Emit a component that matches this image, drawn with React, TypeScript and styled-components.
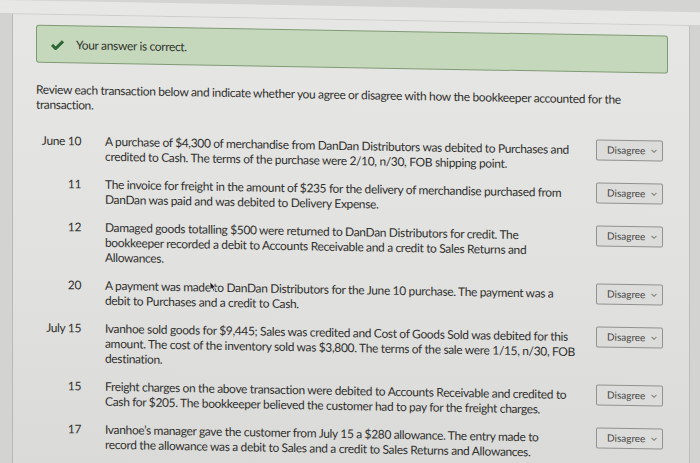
import styled, { createGlobalStyle } from "styled-components";

const GlobalStyle = createGlobalStyle`
  html, body {
    margin: 0;
    padding: 0;
    background: #d4d4d2;
    overflow: hidden;
  }
  body {
    font-family: Lato, "Open Sans", "Liberation Sans", sans-serif;
    color: #30302e;
    letter-spacing: -0.35px;
  }
`;

const Screen = styled.div`
  width: 700px;
  height: 463px;
  display: flex;
  flex-direction: column;
  transform: skewY(1deg);
  transform-origin: 0 0;
`;

const TopStrip = styled.div`
  height: 13px;
  flex: none;
  background: #e7e7e5;
  border-bottom: 1px solid #cdcdcb;
`;

const Frame = styled.div`
  flex: 1;
  display: flex;
`;

const Gutter = styled.div<{ $w: number }>`
  width: ${(p) => p.$w}px;
  flex: none;
  background: #d3d3d1;
`;

const Panel = styled.main`
  width: 678px;
  flex: none;
  border-left: 1px solid #b8b8b6;
  border-right: 1px solid #bdbdbb;
  background: linear-gradient(180deg, #e6e6e4 0%, #e1e1df 55%, #dadad8 100%);
  padding: 10px 21px 0 23px;
  box-sizing: border-box;
`;

const Banner = styled.div`
  height: 38px;
  box-sizing: border-box;
  display: flex;
  align-items: center;
  gap: 12px;
  padding-left: 14px;
  background: #c6d8bb;
  border: 1px solid #7f9b75;
  border-radius: 3px;
  font-size: 12px;
  color: #2f332e;
`;

const Intro = styled.p`
  margin: 19px 0 0;
  font-size: 12px;
  line-height: 15px;
`;

const Line = styled.span`
  display: block;
  white-space: nowrap;
`;

const List = styled.div`
  margin-top: 21px;
  display: flex;
  flex-direction: column;
  gap: 13px;
`;

const Row = styled.div`
  display: flex;
  align-items: flex-start;
  font-size: 12px;
  line-height: 15px;
`;

const DateCell = styled.div`
  width: 45px;
  flex: none;
  text-align: right;
`;

const TextCell = styled.div`
  position: relative;
  width: 472px;
  flex: none;
  margin-left: 24px;
`;

const SelectBox = styled.div`
  margin: -3px 0 0 19px;
  width: 67px;
  height: 21px;
  box-sizing: border-box;
  display: flex;
  align-items: center;
  justify-content: space-between;
  padding: 0 5px 0 10px;
  background: #dcdcda;
  border: 1px solid #92928f;
  border-radius: 2px;
  font-size: 10px;
  letter-spacing: 0;
  color: #444442;
`;

const Cursor = styled.svg`
  position: absolute;
  left: 104px;
  top: 1px;
`;

const Check = () => (
  <svg width="13" height="11" viewBox="0 0 13 11">
    <path d="M1 6 L4.6 9.6 L12 2.2" fill="none" stroke="#2e6736" strokeWidth="3" />
  </svg>
);

const Chevron = () => (
  <svg width="6" height="4" viewBox="0 0 6 4">
    <path d="M0.5 0.5 L3 3 L5.5 0.5" fill="none" stroke="#7a7a78" strokeWidth="1" />
  </svg>
);

const rows = [
  {
    date: "June 10",
    lines: [
      "A purchase of $4,300 of merchandise from DanDan Distributors was debited to Purchases and",
      "credited to Cash. The terms of the purchase were 2/10, n/30, FOB shipping point.",
    ],
  },
  {
    date: "11",
    lines: [
      "The invoice for freight in the amount of $235 for the delivery of merchandise purchased from",
      "DanDan was paid and was debited to Delivery Expense.",
    ],
  },
  {
    date: "12",
    lines: [
      "Damaged goods totalling $500 were returned to DanDan Distributors for credit. The",
      "bookkeeper recorded a debit to Accounts Receivable and a credit to Sales Returns and",
      "Allowances.",
    ],
  },
  {
    date: "20",
    lines: [
      "A payment was made to DanDan Distributors for the June 10 purchase. The payment was a",
      "debit to Purchases and a credit to Cash.",
    ],
    cursor: true,
  },
  {
    date: "July 15",
    lines: [
      "Ivanhoe sold goods for $9,445; Sales was credited and Cost of Goods Sold was debited for this",
      "amount. The cost of the inventory sold was $3,800. The terms of the sale were 1/15, n/30, FOB",
      "destination.",
    ],
  },
  {
    date: "15",
    lines: [
      "Freight charges on the above transaction were debited to Accounts Receivable and credited to",
      "Cash for $205. The bookkeeper believed the customer had to pay for the freight charges.",
    ],
  },
  {
    date: "17",
    lines: [
      "Ivanhoe’s manager gave the customer from July 15 a $280 allowance. The entry made to",
      "record the allowance was a debit to Sales and a credit to Sales Returns and Allowances.",
    ],
  },
];

export default function App() {
  return (
    <>
      <GlobalStyle />
      <Screen>
        <TopStrip />
        <Frame>
          <Gutter $w={12} />
          <Panel>
            <Banner>
              <Check />
              <span>Your answer is correct.</span>
            </Banner>
            <Intro>
              <Line>
                Review each transaction below and indicate whether you agree or disagree with how the
                bookkeeper accounted for the
              </Line>
              <Line>transaction.</Line>
            </Intro>
            <List>
              {rows.map((r) => (
                <Row key={r.date + r.lines[0].slice(0, 8)}>
                  <DateCell>{r.date}</DateCell>
                  <TextCell>
                    {r.lines.map((l) => (
                      <Line key={l}>{l}</Line>
                    ))}
                    {r.cursor && (
                      <Cursor width="8" height="12" viewBox="0 0 8 12">
                        <path
                          d="M1 1 L1 9.5 L3 7.6 L4.6 11 L6 10.3 L4.5 7 L7 7 Z"
                          fill="#222"
                          stroke="#f2f2f2"
                          strokeWidth="0.8"
                        />
                      </Cursor>
                    )}
                  </TextCell>
                  <SelectBox>
                    <span>Disagree</span>
                    <Chevron />
                  </SelectBox>
                </Row>
              ))}
            </List>
          </Panel>
          <Gutter $w={10} />
        </Frame>
      </Screen>
    </>
  );
}
